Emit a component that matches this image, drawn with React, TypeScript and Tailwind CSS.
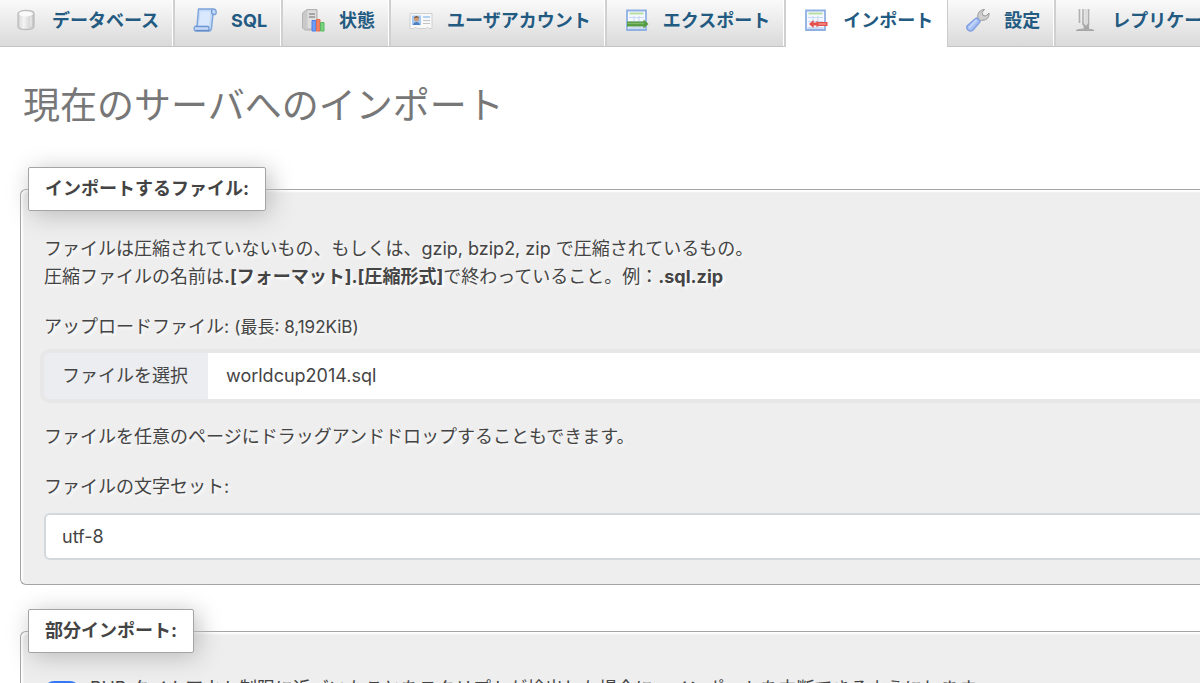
import { useState } from "react";
import type { ReactNode } from "react";

interface Tab {
  label: string;
  icon: ReactNode;
  active?: boolean;
}

const iconClass = "h-6 w-6 shrink-0";

function DatabaseIcon() {
  return (
    <svg className={iconClass} viewBox="0 0 24 24">
      <defs>
        <linearGradient id="db" x1="0" x2="1">
          <stop offset="0" stopColor="#cfcfcf" />
          <stop offset=".35" stopColor="#f4f4f4" />
          <stop offset="1" stopColor="#c4c4c4" />
        </linearGradient>
      </defs>
      <path d="M4 5.5C4 1.5 20 1.5 20 5.5v13c0 4-16 4-16 0z" fill="url(#db)" stroke="#bdbdbd" strokeWidth="1.3" />
      <ellipse cx="12" cy="5.8" rx="7" ry="2.6" fill="#fafafa" />
      <path d="M7 8.5v10M17 8.5v10" stroke="#e8e8e8" strokeWidth="1.5" />
    </svg>
  );
}

function SqlIcon() {
  return (
    <svg className={iconClass} viewBox="0 0 24 24">
      <path d="M5.500 1h15c3 0 3.500 4.500 1.500 5.500h-2L18.500 20c-.2 2-1 3-2.500 3H3C.5 23 .5 18.500 3 18h1z" fill="#c4daf8" stroke="#7ba3da" strokeWidth="1.400" strokeLinejoin="round" />
      <path d="M7.500 3.500h10L16.200 17.500H6z" fill="#d9e8fd" />
      <path d="M3 18.500h12c1.200 0 1.200 3.500.5 4.500M19.500 1.500c-1.500 1-1.200 4.500.8 5" fill="none" stroke="#6f98d2" strokeWidth="1.300" />
      <path d="M2.500 22.500H16" stroke="#6488c4" strokeWidth="1.300" />
    </svg>
  );
}

function StatusIcon() {
  return (
    <svg className={iconClass} viewBox="0 0 24 24">
      <path d="M1.500 5 6 1.500h10V20l-3 2H4l-2.500-2z" fill="#c9c9c9" stroke="#b3b3b3" />
      <path d="M6.500 2.500H15V20H6.500z" fill="#dedede" />
      <path d="M8 6h6M8 9h6" stroke="#939393" strokeWidth="1.300" />
      <path d="M11 12.500h4V23h-4z" fill="#6e9df6" stroke="#4b80e2" />
      <path d="M15.500 11.500h3.500V23h-3.500z" fill="#f28264" stroke="#e26d50" />
      <path d="M19.500 14.500H23V23h-3.500z" fill="#7cd17c" stroke="#56b862" />
    </svg>
  );
}

function UsersIcon() {
  return (
    <svg className={iconClass} viewBox="0 0 24 24">
      <path d="M1 5.500h22v15h-3l-1.500-1.500L17 20.500H8L6.500 19 5 20.500H1z" fill="#f8f8f8" stroke="#d0d0d0" />
      <path d="M3 7.500h9v9.500H3z" fill="#a3c9f3" />
      <circle cx="7.500" cy="11" r="2.500" fill="#d09c76" />
      <path d="M5 10.500c0-3.500 5-3.500 5 0-1.500-1.500-3-1.500-5 0z" fill="#7a5638" />
      <path d="M4 17c.5-4 6.500-4 7 0z" fill="#4b80c0" />
      <path d="M14 9h7" stroke="#b2d1f2" strokeWidth="2" />
      <path d="M14 12.500h7M14 15.500h7" stroke="#c4c4c4" />
    </svg>
  );
}

function SheetBase() {
  return (
    <>
      <path d="M2 2.500h19v19.500H2z" fill="#f4f8ff" stroke="#8fb0e3" strokeWidth="1.800" />
      <path d="M4.500 5.500h14" stroke="#b4dc9a" strokeWidth="1.800" />
      <path d="M4 9.500h15M4 13.500h15M9 8v11M14 8v11" stroke="#c9d9f3" strokeWidth="1.200" />
      <path d="M3.500 20h16" stroke="#c2d4f1" strokeWidth="1.500" />
    </>
  );
}

function ExportIcon() {
  return (
    <svg className={iconClass} viewBox="0 0 24 24">
      <SheetBase />
      <path d="M2 13.500h16.500v-2L23.500 16l-5 4.500v-2H2z" fill="#569a43" />
      <path d="M2.500 15.500H19" stroke="#7fba6c" strokeWidth="1.300" />
    </svg>
  );
}

function ImportIcon() {
  return (
    <svg className={iconClass} viewBox="0 0 24 24">
      <SheetBase />
      <path d="M5 16l4.500-4v2.500h3v-2l1.500 1.500h9.500v4H14l-1.500 1.500v-2h-3V20z" fill="#e6504a" />
      <path d="M14.500 16H22" stroke="#f49a91" strokeWidth="1.300" />
    </svg>
  );
}

function SettingsIcon() {
  return (
    <svg className={iconClass} viewBox="0 0 24 24">
      <path d="M12 9.500c-1-4 2-8 6.500-8l-2.500 3 1 3 3 .5 3-3c.5 5-3.500 8-7.500 7L13.500 14 10 10.500z" fill="#cfcfcf" stroke="#979797" strokeLinejoin="round" />
      <path d="M9.500 10.500c2-1.500 5.500 2 4 4L7 22c-3 3-8-1-5.500-4.500z" fill="#a5bff3" stroke="#7f9de0" strokeWidth="1.300" />
      <path d="M10 12.500l-6.500 7" stroke="#c3d5fb" strokeWidth="2" strokeLinecap="round" />
    </svg>
  );
}

function ReplicationIcon() {
  return (
    <svg className={iconClass} viewBox="0 0 24 24">
      <path d="M5.500 1v14M9 1v16M14.500 1v16" stroke="#b0b0b0" strokeWidth="1.600" />
      <path d="M12 1v17" stroke="#dcdcdc" strokeWidth="3" />
      <path d="M8.500 14l3.500 4 3-4v7h-5z" fill="#a8a8a8" />
      <path d="M2 22.500c4-2 15-2 18 0z" fill="#b3b3b3" stroke="#a6a6a6" />
    </svg>
  );
}

const tabs: Tab[] = [
  { label: "データベース", icon: <DatabaseIcon /> },
  { label: "SQL", icon: <SqlIcon /> },
  { label: "状態", icon: <StatusIcon /> },
  { label: "ユーザアカウント", icon: <UsersIcon /> },
  { label: "エクスポート", icon: <ExportIcon /> },
  { label: "インポート", icon: <ImportIcon />, active: true },
  { label: "設定", icon: <SettingsIcon /> },
  { label: "レプリケーション", icon: <ReplicationIcon /> },
];

function TopMenu() {
  return (
    <nav className="overflow-hidden">
      <ul className="flex">
        {tabs.map((tab) => (
          <li key={tab.label} className="group shrink-0">
            <a
              href="#"
              aria-current={tab.active ? "page" : undefined}
              className={
                tab.active
                  ? "flex h-[47px] items-start gap-[15px] border-r border-[#ccc] bg-white pt-2 pr-3.5 pl-[18px] font-bold whitespace-nowrap text-[#235a81]"
                  : "flex h-[47px] items-start gap-3.5 border-r-2 border-b border-r-[#d0d0d0] border-b-[#c4c4c4] bg-linear-to-b from-[#fafafa] to-[#dadada] pt-2 pr-3.5 pl-[18px] font-bold whitespace-nowrap text-[#235a81] shadow-[inset_-1px_0_#fff] group-first:pl-3.5"
              }
            >
              {tab.icon}
              <span className="leading-[26px]">{tab.label}</span>
            </a>
          </li>
        ))}
      </ul>
    </nav>
  );
}

function Panel({ title, children }: { title: string; children: ReactNode }) {
  return (
    <fieldset className="ml-5 min-w-0 rounded-l-md border border-r-0 border-[#a4a4a4] bg-[#eee] pr-6 pb-6 pl-[23px] shadow-[inset_2px_2px_2px_#fff] [text-shadow:2px_2px_3px_#fff]">
      <legend className="-ml-4 rounded-xs border border-[#a4a4a4] bg-white px-4 py-[7px] leading-7 font-bold shadow-[4px_4px_24px_#bbb]">
        {title}
      </legend>
      {children}
    </fieldset>
  );
}

export default function App() {
  const [charset, setCharset] = useState("utf-8");
  const [allowInterrupt, setAllowInterrupt] = useState(true);

  return (
    <div className="h-screen overflow-hidden bg-white font-['Inter','Noto_Sans_CJK_JP',sans-serif] text-lg text-[#444]">
      <TopMenu />
      <main>
        <h1 className="mt-[34px] ml-[23px] text-[37px] leading-[50px] text-[#777]">現在のサーバへのインポート</h1>

        <form className="mt-9 flex flex-col gap-6">
          <Panel title="インポートするファイル:">
            <p className="mt-6 leading-7">
              ファイルは圧縮されていないもの、もしくは、gzip, bzip2, zip で圧縮されているもの。
              <br />
              圧縮ファイルの名前は<strong>.[フォーマット].[圧縮形式]</strong>で終わっていること。例：
              <strong>.sql.zip</strong>
            </p>

            <label htmlFor="import-file" className="mt-[22px] block leading-7">
              アップロードファイル: <small className="text-[17px]">(最長: 8,192KiB)</small>
            </label>
            <div className="mt-3 -mr-6 flex rounded-l-md bg-white outline-4 outline-[#e7e7e7]">
              <button id="import-file" type="button" className="rounded-l-md bg-[#ebedf0] py-[9px] pr-5 pl-[18px] leading-7">
                ファイルを選択
              </button>
              <span className="px-[18px] py-[9px] leading-7">worldcup2014.sql</span>
            </div>

            <p className="mt-6 leading-7">ファイルを任意のページにドラッグアンドドロップすることもできます。</p>

            <label htmlFor="charset" className="mt-[22px] block leading-7">
              ファイルの文字セット:
            </label>
            <div className="mt-3 -mr-6">
              <select
                id="charset"
                value={charset}
                onChange={(e) => setCharset(e.target.value)}
                className="block h-[47px] w-full appearance-none rounded-l-md border-2 border-r-0 border-[#d3d8dd] bg-white px-4"
              >
                <option>utf-8</option>
                <option>utf-16</option>
                <option>sjis</option>
                <option>euc-jp</option>
              </select>
            </div>
          </Panel>

          <Panel title="部分インポート:">
            <div className="mt-5 flex items-start gap-2.5">
              <input
                id="allow-interrupt"
                type="checkbox"
                checked={allowInterrupt}
                onChange={(e) => setAllowInterrupt(e.target.checked)}
                className="mt-2 h-5 w-9 shrink-0 appearance-none rounded-full bg-[#ccc] checked:bg-[#3478f6]"
              />
              <label htmlFor="allow-interrupt" className="leading-8 whitespace-nowrap">
                PHP タイムアウト制限に近づいたことをスクリプトが検出した場合に、インポートを中断できるようにします
              </label>
            </div>
          </Panel>
        </form>
      </main>
    </div>
  );
}
